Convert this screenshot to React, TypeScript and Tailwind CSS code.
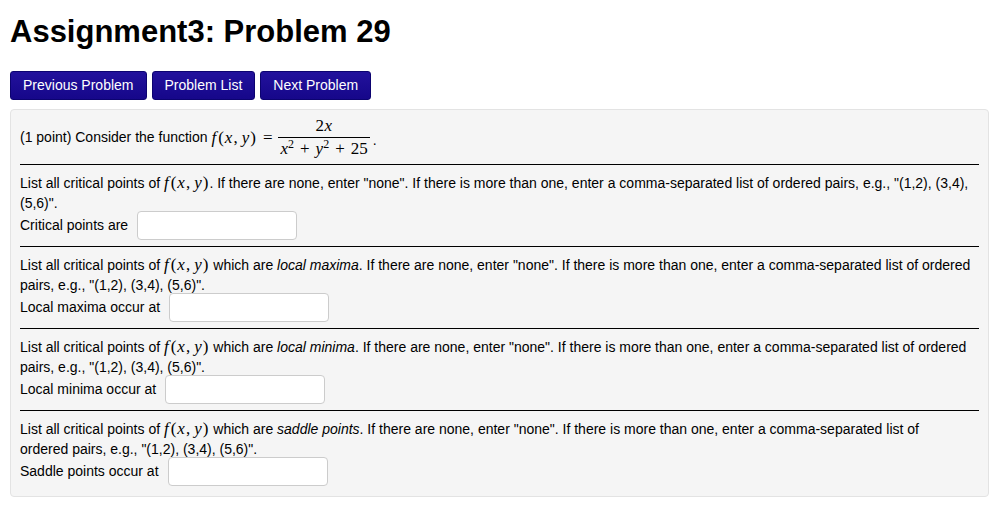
import React from "react";

const sans = { fontFamily: '"Liberation Sans", Arial, Helvetica, sans-serif' };

function MathF() {
  return (
    <span className="font-['Liberation_Serif',serif] text-[17px] leading-none whitespace-nowrap tracking-[1px]">
      <i className="pr-[1px]">f</i>(<i>x</i>,<span className="inline-block w-[3px]" /><i>y</i>)
    </span>
  );
}

function Fraction() {
  return (
    <span className="inline-flex flex-col items-center font-['Liberation_Serif',serif] text-[17px] ml-[6px] mr-[3px]">
      <span className="leading-[18px] px-[2px] tracking-[0.5px]">
        2<i>x</i>
      </span>
      <span className="block h-px w-full bg-black my-[2px]" />
      <span className="leading-[18px] px-[2px] whitespace-nowrap">
        <i>x</i>
        <sup className="text-[12px] -top-[6px]">2</sup>
        <span className="mx-[6px]">+</span>
        <i>y</i>
        <sup className="text-[12px] -top-[6px]">2</sup>
        <span className="mx-[6px]">+</span>25
      </span>
    </span>
  );
}

function Answer({ label }: { label: string }) {
  return (
    <div className="flex items-center h-[29px] -mt-[2px]">
      <span>{label}</span>
      <input
        type="text"
        className="ml-[9px] w-[160px] h-[29px] bg-white border border-[#cccccc] rounded-[4px] outline-none"
      />
    </div>
  );
}

function Section({
  first,
  second,
  label,
}: {
  first: React.ReactNode;
  second: React.ReactNode;
  label: string;
}) {
  return (
    <div>
      <div className="h-px bg-black" />
      <div className="mt-[8px] leading-[20px]">
        <div className="whitespace-nowrap">{first}</div>
        <div className="whitespace-nowrap">{second}</div>
      </div>
      <Answer label={label} />
      <div className="h-[6px]" />
    </div>
  );
}

const tail =
  '. If there are none, enter "none". If there is more than one, enter a comma-separated list of';

export default function App() {
  return (
    <div className="min-h-screen bg-white text-black pl-[10px] pr-[2px]" style={sans}>
      <h1 className="pt-[13px] text-[31px] leading-[37px] font-bold">
        Assignment3: Problem 29
      </h1>

      <div className="mt-[21px] flex gap-[5px]">
        {["Previous Problem", "Problem List", "Next Problem"].map(b => (
          <button
            key={b}
            className="h-[29px] px-[12px] text-[14px] text-white rounded-[3px] border border-[#0c0370] bg-gradient-to-b from-[#22119c] to-[#16078a]"
          >
            {b}
          </button>
        ))}
      </div>

      <div className="mt-[9px] bg-[#f5f5f5] border border-[#e3e3e3] rounded-[4px] pt-[7px] pb-[4px] pl-[9px] pr-[9px] text-[14px]">
        <div className="flex items-center h-[41px]">
          <span>(1 point) Consider the function&nbsp;</span>
          <MathF />
          <span className="font-['Liberation_Serif',serif] text-[17px] ml-[6px]">=</span>
          <Fraction />
          <span className="mt-[5px]">.</span>
        </div>
        <div className="h-[6px]" />

        <Section
          first={
            <>
              List all critical points of <MathF />
              {'. If there are none, enter "none". If there is more than one, enter a comma-separated list of ordered pairs, e.g., "(1,2), (3,4),'}
            </>
          }
          second={'(5,6)".'}
          label="Critical points are"
        />
        <Section
          first={
            <>
              List all critical points of <MathF /> which are <i>local maxima</i>
              {tail} ordered
            </>
          }
          second={'pairs, e.g., "(1,2), (3,4), (5,6)".'}
          label="Local maxima occur at"
        />
        <Section
          first={
            <>
              List all critical points of <MathF /> which are <i>local minima</i>
              {tail} ordered
            </>
          }
          second={'pairs, e.g., "(1,2), (3,4), (5,6)".'}
          label="Local minima occur at"
        />
        <Section
          first={
            <>
              List all critical points of <MathF /> which are <i>saddle points</i>
              {tail}
            </>
          }
          second={'ordered pairs, e.g., "(1,2), (3,4), (5,6)".'}
          label="Saddle points occur at"
        />
      </div>
    </div>
  );
}
